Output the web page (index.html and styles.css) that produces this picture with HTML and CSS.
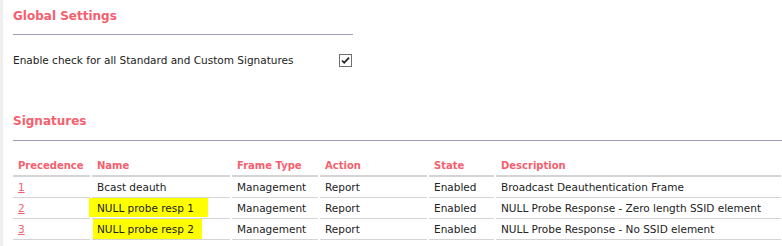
FILE: index.html
```html
<!DOCTYPE html>
<html lang="en">
   <head>
      <meta charset="UTF-8" />
      <title>Signatures</title>
      <link rel="stylesheet" href="styles.css">
   </head>
   <body>
      <div class="page">
         <div class="section global">
            <h2 class="subtitle">Global Settings</h2>
            <div class="setting">
               <span>Enable check for all Standard and Custom Signatures</span>
               <span class="checkbox">
                  <svg width="13" height="13" viewBox="0 0 13 13">
                     <rect x="0.5" y="0.5" width="12" height="12" fill="#fff" stroke="#707070"/>
                     <path d="M3 6.5 L5.2 8.8 L10 3.6" fill="none" stroke="#222" stroke-width="1.8"/>
                  </svg>
               </span>
            </div>
         </div>
         <div class="section signatures">
            <h2 class="subtitle">Signatures</h2>
            <table class="tabla-firmas">
               <thead>
                  <tr>
                     <th class="c-prec">Precedence</th>
                     <th class="c-name">Name</th>
                     <th class="c-type">Frame Type</th>
                     <th class="c-action">Action</th>
                     <th class="c-state">State</th>
                     <th class="c-desc">Description</th>
                  </tr>
               </thead>
               <tbody>
                  <tr>
                     <td><a href="#">1</a></td>
                     <td>Bcast deauth</td>
                     <td>Management</td>
                     <td>Report</td>
                     <td>Enabled</td>
                     <td>Broadcast Deauthentication Frame</td>
                  </tr>
                  <tr>
                     <td><a href="#">2</a></td>
                     <td><span class="marker m1">NULL probe resp 1</span></td>
                     <td>Management</td>
                     <td>Report</td>
                     <td>Enabled</td>
                     <td>NULL Probe Response - Zero length SSID element</td>
                  </tr>
                  <tr>
                     <td><a href="#">3</a></td>
                     <td><span class="marker m2">NULL probe resp 2</span></td>
                     <td>Management</td>
                     <td>Report</td>
                     <td>Enabled</td>
                     <td>NULL Probe Response - No SSID element</td>
                  </tr>
               </tbody>
            </table>
         </div>
      </div>
   </body>
</html>
```

FILE: styles.css
```css
body {
font-family: 'DejaVu Sans', Verdana, sans-serif;
font-size: 10.5px;
color: #222;
background: #fff;
margin: 0;
}
.page {
border-left: 3px solid #eeeeee;
padding: 0 0 0 10px;
min-height: 246px;
box-sizing: border-box;
}
h2.subtitle {
color: #f5606e;
font-size: 12px;
font-weight: 700;
margin: 0;
padding: 9px 0 0 0;
height: 25px;
line-height: 14px;
border-bottom: 1px solid #9c9dbd;
}
.global {
width: 340px;
}
.setting {
display: flex;
justify-content: space-between;
align-items: center;
height: 16px;
margin-top: 17px;
}
.checkbox {
display: flex;
margin-right: 1px;
}
.signatures {
margin-top: 35px;
}
.signatures h2.subtitle {
padding-top: 11px;
height: 26px;
}
.tabla-firmas {
border-collapse: separate;
border-spacing: 2px 0;
margin: 15px 0 0 -2px;
width: 772px;
table-layout: fixed;
}
th, td {
text-align: left;
padding: 3px 4px 3px 5px;
line-height: 14px;
border-bottom: 1px solid #d4d4d4;
white-space: nowrap;
}
thead th {
color: #f5606e;
font-size: 10px;
font-weight: 700;
padding-bottom: 2px;
border-bottom: 2px solid #d4d4d4;
}
.c-prec { width: 68px; }
.c-name { width: 129px; }
.c-type { width: 77px; }
.c-action { width: 98px; }
.c-state { width: 56px; }
td a {
color: #f5606e;
}
.marker {
background: #ffff00;
padding: 4px 14px 3px 8px;
margin-left: -8px;
}
.marker.m2 {
padding: 4px 8px 4px 4px;
margin-left: -4px;
}
```
